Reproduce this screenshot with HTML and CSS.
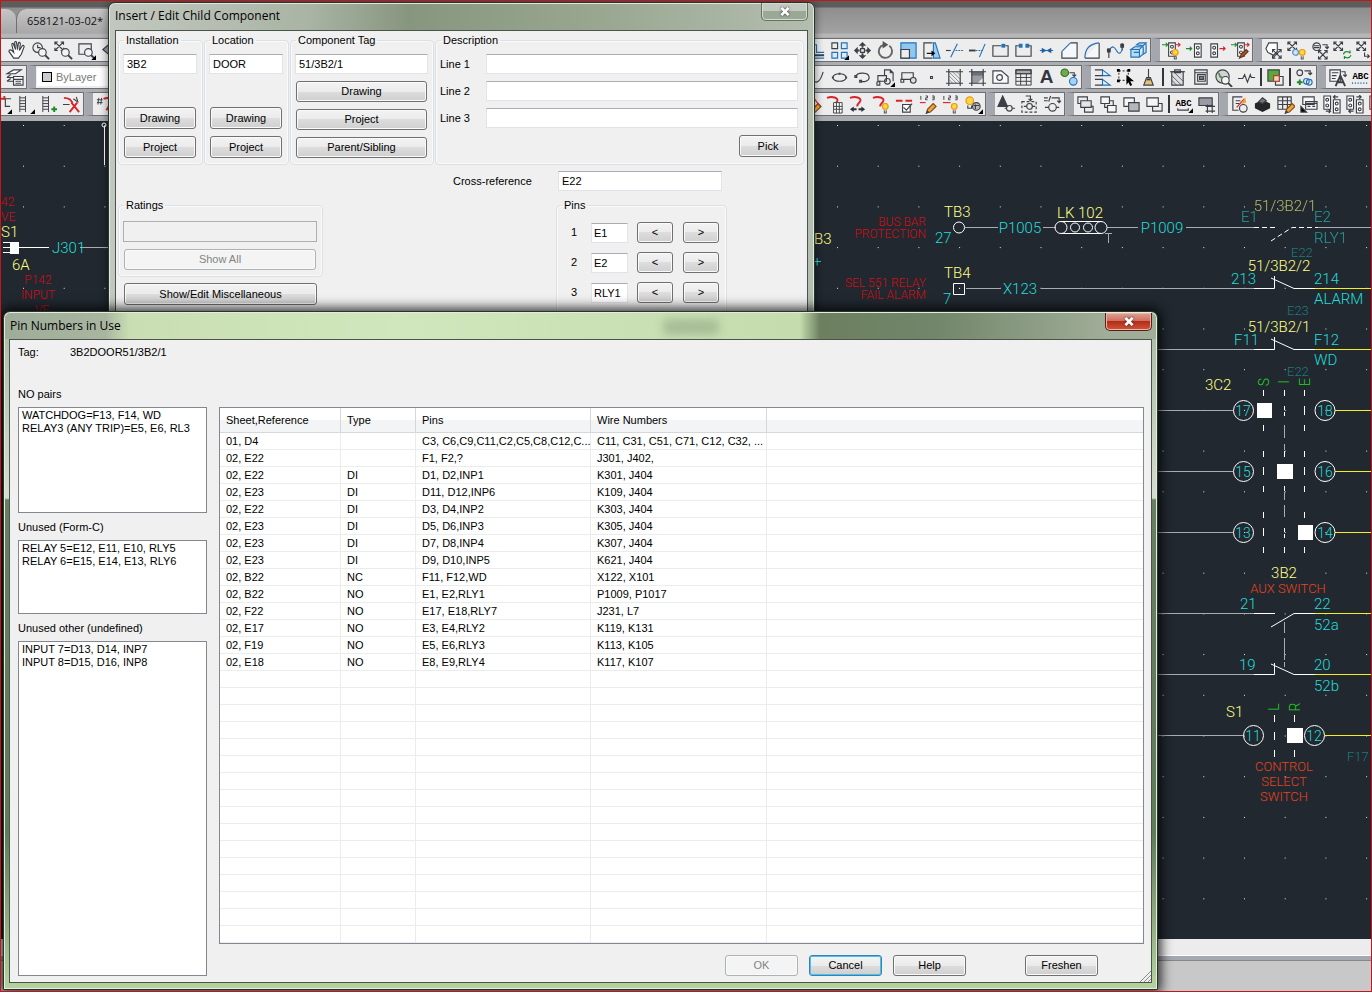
FILE: index.html
```html
<!DOCTYPE html>
<html lang="en">
<head>
  <meta charset="UTF-8">
  <meta name="viewport" content="width=device-width, initial-scale=1.0">
  <title>658121-03-02*</title>
  <link rel="stylesheet" href="styles.css">
</head>
<body>
  <!-- shared icon parts -->
  <svg class="defs" width="0" height="0">
    <defs>
      <g id="mag"><circle cx="12" cy="12" r="4" fill="#f4f4f4"/><path d="M15 15l4 4" stroke-width="2"/></g>
      <path id="more" d="M20 15v5h-5z" fill="#000" stroke="none"/>
      <g id="bulb"><circle cx="14" cy="12" r="3" fill="#ffd83a" stroke="#e8961e"/><path d="M13 16v3h2v-3" stroke="#56606c"/></g>
      <g id="pencil"><path d="M9 19l1-4 6-6 3 3-6 6z" fill="#f0a63a" stroke="#7d4a12"/><path d="M9 19l1-2 1 1z" fill="#222"/></g>
      <g id="term"><path d="M0 0h7v14H0z" fill="#fff"/><circle cx="3.500" cy="4" r="1.500"/><circle cx="3.500" cy="10" r="1.500"/></g>
      <path id="cross" d="M1 1l9 9M10 1L1 10M1 4V1h3M7 1h3v3M1 7v3h3M10 7v3H7"/>
      <path id="hook" class="red" stroke-width="2" d="M1 3c6-2 12 0 11 3s-4 3-3 6"/>
      <g id="ladder" stroke-width="1"><path d="M4 1v17M10 1v17M4 3h6M4 6h6M4 9h6M4 12h6M4 15h6"/></g>
    </defs>
  </svg>

  <header class="top">
    <nav class="tabs">
      <a class="tab tab-prev" href="#" aria-label="Previous drawing"></a>
      <a class="tab" href="#">658121-03-02*</a>
    </nav>

    <div class="tool-row">
      <div class="bars">
        <div class="bar bar-start pan">
          <button class="tool" aria-label="Pan"><svg viewBox="0 0 20 20"><path d="M6 18l-5-7c0-2 2-2 3-1l2 2-2-8c0-2 2-2 2 0l2 5-1-7c0-2 2-2 2 0l1 7 1-7c0-1 2-1 2 1l-1 7 3-5c1-1 2 0 2 1l-3 8-3 4z" fill="#fff"/></svg></button>
          <button class="tool" aria-label="Zoom realtime"><svg viewBox="0 0 20 20"><circle cx="7" cy="7" r="5"/><path d="M7 4v3h3"/><use href="#mag"/></svg></button>
          <button class="tool" aria-label="Zoom window"><svg viewBox="0 0 20 20"><use href="#cross"/><use href="#mag"/></svg></button>
          <button class="tool" aria-label="Zoom area"><svg viewBox="0 0 20 20"><path d="M2 3h13v11H2z"/><use href="#mag"/><use href="#more"/></svg></button>
          <button class="tool" aria-label="Zoom previous"><svg viewBox="0 0 20 20"><path d="M9 4L3 9l6 5z" fill="#9aa0a8"/></svg></button>
        </div>
      </div>
      <div class="bars">
        <div class="bar bar-start">
          <button class="tool" aria-label="Offset"><svg viewBox="0 0 20 20"><path class="blue" d="M2 4h8v8h8M2 18h16"/><path d="M2 8h5v7h11" stroke-width="2"/></svg></button>
          <button class="tool" aria-label="Array"><svg viewBox="0 0 20 20"><path d="M2 2h6v6H2z"/><path class="blue" d="M12 2h6v6h-6zM2 12h6v6H2zM12 12h6v6h-6z" fill="#d8ebfa"/><use href="#more"/></svg></button>
          <button class="tool" aria-label="Move"><svg viewBox="0 0 20 20"><path d="M8 8h4v4H8z"/><path d="M10 1l4 4h-3v2H9V5H6zM10 19l-4-4h3v-2h2v2h3zM1 10l4-4v3h2v2H5v3zM19 10l-4 4v-3h-2V9h2V6z" fill="#3c4046" stroke="none"/></svg></button>
          <button class="tool" aria-label="Rotate"><svg viewBox="0 0 20 20"><path d="M8 4a7 7 0 1 0 6 1" stroke="#666" stroke-width="2"/><path d="M7 0l6 4-6 4z" fill="#555" stroke="none"/></svg></button>
          <button class="tool" aria-label="Scale"><svg viewBox="0 0 20 20"><path d="M2 2h16v16H2z" fill="#8fc8ee" stroke="#2471b8"/><path d="M2 9h9v9H2z" fill="#eee"/></svg></button>
          <button class="tool" aria-label="Stretch"><svg viewBox="0 0 20 20"><path class="blue" d="M12 2h2l5 16h-7z" fill="#9ccdf0"/><path d="M11 2H2v16h9"/><path d="M5 13h7" stroke="#000"/><path d="M10 10l4 3-4 3z" fill="#000" stroke="none"/></svg></button>
          <button class="tool" aria-label="Trim"><svg viewBox="0 0 20 20"><path d="M1 10h5"/><path class="blue" d="M6 17l7-14"/><path class="blue" d="M11 10h9" stroke-dasharray="2 1"/></svg></button>
          <button class="tool" aria-label="Extend"><svg viewBox="0 0 20 20"><path d="M1 10h7" stroke-width="2"/><path class="blue" d="M12 17l6-14"/><path class="blue" d="M8 10h7" stroke-dasharray="2 1"/></svg></button>
          <button class="tool" aria-label="Break at point"><svg viewBox="0 0 20 20"><path d="M11 5H2v11h16V5h-3"/><path d="M11 3h4v4h-4z" fill="#2471b8" stroke="none"/></svg></button>
          <button class="tool" aria-label="Break"><svg viewBox="0 0 20 20"><path d="M5 5H2v11h16V5h-3"/><path d="M5 3h4v4H5zM12 3h4v4h-4z" fill="#2471b8" stroke="none"/></svg></button>
          <button class="tool" aria-label="Join"><svg viewBox="0 0 20 20"><path class="blue" d="M3 10h14"/><path d="M5 7l5 3-5 3zM15 7l-5 3 5 3z" fill="#1f5f9e" stroke="none"/></svg></button>
          <button class="tool" aria-label="Chamfer"><svg viewBox="0 0 20 20"><path d="M11 2h7v16H2v-7" fill="#f4f8fb"/><path class="blue" d="M2 11l9-9"/></svg></button>
          <button class="tool" aria-label="Fillet"><svg viewBox="0 0 20 20"><path d="M17 2v16H2" fill="#f4f8fb"/><path class="blue" d="M2 18C2 9 6 3 17 2"/></svg></button>
          <button class="tool" aria-label="Blend curves"><svg viewBox="0 0 20 20"><path d="M3 18V8M17 2v8"/><path class="blue" d="M3 10c4-6 6-4 8 0s5 5 7-5"/><path d="M1 8h4v4H1zM15 3h4v4h-4z" fill="#3c4046" stroke="none"/></svg></button>
          <button class="tool" aria-label="Explode"><svg viewBox="0 0 20 20"><path class="blue" d="M2 9l4-3h8l-3 3zM2 9h9v8H2zM11 17l4-3V6M8 4l3-2h7l-3 3zM15 14l3-2V3M5 12h6v4" fill="#b5dcf5"/></svg></button>
        </div>
        <div class="bar">
          <button class="tool" aria-label="Terminal lamp"><svg viewBox="0 0 20 20"><use href="#term" x="7" y="2"/><path class="green" d="M0 4h6M4 2l2 2-2 2"/><path class="red" d="M14 4h5M17 2l2 2-2 2"/><use href="#bulb"/></svg></button>
          <button class="tool" aria-label="Terminal in"><svg viewBox="0 0 20 20"><use href="#term" x="10" y="3"/><path class="green" d="M1 8h6M5 6l2 2-2 2"/></svg></button>
          <button class="tool" aria-label="Terminal out"><svg viewBox="0 0 20 20"><use href="#term" x="3" y="3"/><path class="red" d="M12 8h6M16 6l2 2-2 2"/></svg></button>
          <button class="tool" aria-label="Terminal erase"><svg viewBox="0 0 20 20"><use href="#term" x="7" y="2"/><path class="green" d="M0 4h6M4 2l2 2-2 2"/><path class="red" d="M14 4h5M17 2l2 2-2 2"/><path d="M9 18l2-4 5-5 2 2-5 5z" fill="#b5552c" stroke="#6c3018"/></svg></button>
        </div>
        <div class="bar">
          <button class="tool" aria-label="Find tag"><svg viewBox="0 0 20 20"><path d="M5 2h9v9l-4 4-6-3-2-4z" fill="#fff"/><use href="#cross" x="8" y="8"/></svg></button>
          <button class="tool" aria-label="Highlight references"><svg viewBox="0 0 20 20"><use href="#cross"/><circle cx="9" cy="12" r="3" fill="#cfe6fa" stroke="#4a8cc8"/><use href="#bulb" x="2"/></svg></button>
          <button class="tool" aria-label="Copy reference"><svg viewBox="0 0 20 20"><circle cx="7" cy="6" r="4"/><path d="M4 5h6M4 7h6M13 4h5v4M16 6l2 2 2-2"/><use href="#cross" x="8" y="9"/></svg></button>
          <button class="tool" aria-label="Update reference"><svg viewBox="0 0 20 20"><use href="#cross"/><path class="green" d="M11 14c1-4 6-3 7-1v-3M19 15c-2 4-6 3-7 1v3"/></svg></button>
          <button class="tool" aria-label="Reference list"><svg viewBox="0 0 20 20"><use href="#cross"/><path d="M9 12v4h5M12 14l2 2-2 2M16 13h4M16 16h4M16 19h4"/></svg></button>
        </div>
      </div>
    </div>

    <div class="tool-row">
      <div class="bars">
        <div class="bar bar-start layers">
          <button class="tool" aria-label="Layers"><svg viewBox="0 0 20 20"><path d="M2 6l7-4h8l-6 4zM2 10l4-3M2 14l4-3M2 10h7M2 14h7" fill="#fff"/><path d="M9 9h10v9H9zM9 12h10M11 14h6M11 16h6" fill="#fff"/></svg></button>
        </div>
        <div class="bar">
          <label class="combo"><i class="swatch"></i><select aria-label="Colour"><option>ByLayer</option></select></label>
        </div>
      </div>
      <div class="bars">
        <div class="bar bar-start">
          <button class="tool" aria-label="Arc"><svg viewBox="0 0 20 20"><path d="M6 12c4 6 8 2 11-8"/></svg></button>
          <button class="tool" aria-label="Ellipse"><svg viewBox="0 0 20 20"><ellipse cx="10" cy="10" rx="7" ry="4"/><path d="M2 9h2v2H2zM16 9h2v2h-2zM9 5h2v2H9z" fill="#3c4046" stroke="none"/></svg></button>
          <button class="tool" aria-label="Ellipse arc"><svg viewBox="0 0 20 20"><path d="M3 9c1-5 14-5 14 1 0 4-6 5-9 4M2 8h2v2H2zM7 13h2v2H7z"/></svg></button>
          <button class="tool" aria-label="Insert block"><svg viewBox="0 0 20 20"><path d="M9 8V2h6l3 3v9M15 2v3h3M2 8h9v6H2z"/><circle cx="12" cy="14" r="3"/><path d="M4 14v4H1v-3z"/><use href="#more"/></svg></button>
          <button class="tool" aria-label="Make block"><svg viewBox="0 0 20 20"><path d="M3 5h12v7H3zM2 12h3v3H2z"/><circle cx="15" cy="13" r="3" fill="#ddd"/></svg></button>
          <button class="tool" aria-label="Point"><svg viewBox="0 0 20 20"><path d="M9 9h2v2H9z"/></svg></button>
          <button class="tool" aria-label="Hatch"><svg viewBox="0 0 20 20"><path d="M4 8l8 8M4 12l4 4M4 4l12 12M8 4l8 8M12 4l4 4" stroke="#777" stroke-width="0.800"/><path d="M4 1v18M16 1v18M1 4h18M1 16h18"/></svg></button>
          <button class="tool" aria-label="Gradient"><svg viewBox="0 0 20 20"><path d="M4 4h12v6l-6 6H4z" fill="#9a9da1" stroke="none"/><path d="M4 4h12v4H4z" fill="#6d7075" stroke="none"/><path d="M4 1v18M16 1v18M1 4h18M1 16h18"/></svg></button>
          <button class="tool" aria-label="Region"><svg viewBox="0 0 20 20"><path d="M2 3h9l7 6v7H2z" fill="#f8f8f8"/><circle cx="9" cy="10" r="3"/></svg></button>
          <button class="tool" aria-label="Table"><svg viewBox="0 0 20 20"><path d="M2 2h16v4H2z" fill="#aaa"/><path d="M2 2h16v16H2zM2 6h16M2 10h16M2 14h16M7 6v12M13 6v12" stroke-width="1"/></svg></button>
          <button class="tool tool-text" aria-label="Text">A</button>
          <button class="tool" aria-label="Add selected"><svg viewBox="0 0 20 20"><circle cx="5" cy="5" r="4" fill="#6cab52" stroke="#376e26"/><circle cx="14" cy="14" r="4" fill="#a7d3f5" stroke="#2471b8"/><path d="M10 5h5v4M13 7l2 2 2-2"/></svg></button>
        </div>
        <div class="bar">
          <button class="tool" aria-label="Mirror"><svg viewBox="0 0 20 20"><path class="blue" d="M10 2l8 6h-8zM10 12l8 6h-8z" fill="#e3f1fb"/><path d="M10 2H2M10 8H2M10 12H2M10 18H2"/></svg></button>
          <button class="tool" aria-label="Select"><svg viewBox="0 0 20 20"><path d="M3 3h10v10H3z" stroke-dasharray="2 2"/><path d="M1 1h3v3H1zM12 1h3v3h-3zM1 12h3v3H1zM11 7l8 7h-4l2 4-2 1-2-4-2 3z" fill="#000" stroke="none"/></svg></button>
          <button class="tool" aria-label="Clean up"><svg viewBox="0 0 20 20"><path d="M10 1v9"/><path d="M8 10h4l3 8H5z" fill="#e3c17a"/><path d="M8 12h4" stroke-width="2"/></svg></button>
          <i class="sep"></i>
          <button class="tool" aria-label="Clipboard"><svg viewBox="0 0 20 20"><path d="M4 4h12v14H4z" fill="#dcdedf"/><path d="M4 8l10 10M4 13l5 5M6 4l10 10" stroke-width="0.800"/><path d="M2 4h16M7 2h6v3H7z"/></svg></button>
          <button class="tool" aria-label="Panel layout"><svg viewBox="0 0 20 20"><path d="M4 2h13v15H4zM7 7h8v7H7zM4 5h13" fill="#e4e6e8"/><path d="M9 9h4v3H9z" fill="#888"/></svg></button>
          <button class="tool" aria-label="Surfer"><svg viewBox="0 0 20 20"><circle cx="9" cy="9" r="7" fill="#cfd6d2"/><path d="M4 5c4 2 0 5 5 5" stroke="#5b8a5b" stroke-width="2"/><use href="#mag" y="1"/></svg></button>
          <button class="tool" aria-label="Signal"><svg viewBox="0 0 20 20"><path d="M1 11h5l2-4 3 8 3-8 1 3h4"/></svg></button>
          <i class="sep"></i>
          <button class="tool" aria-label="Send to back"><svg viewBox="0 0 20 20"><path d="M10 9h8v9h-8z"/><path d="M2 2h12v12H2z" fill="#57a83f"/><path d="M8 8h6v6H8z" fill="#e7d7bf" stroke="#c0392b"/></svg></button>
          <i class="sep"></i>
          <button class="tool" aria-label="Swap block"><svg viewBox="0 0 20 20"><circle cx="5" cy="5" r="3"/><path d="M10 3h6v4M14 5l2 2 2-2"/><path class="green" d="M5 12v6M2 15h6" stroke-width="2"/><circle cx="12" cy="14" r="3" stroke="#2471b8"/><circle cx="15" cy="15" r="3" stroke="#2471b8"/></svg></button>
        </div>
        <div class="bar">
          <button class="tool" aria-label="Text report"><svg viewBox="0 0 20 20"><path d="M2 2h11v12H2zM4 5h7M4 8h5M4 11h4M14 4h4v5M16 7l2 2 2-2" fill="#f4f4f4"/><path d="M8 19l5-11 5 11M10 15h6" stroke-width="2"/></svg></button>
          <button class="tool tool-abc" aria-label="Spelling">ABC<svg viewBox="0 0 20 20"><path class="blue" d="M1 17h18" stroke-dasharray="1 2" stroke-width="2"/></svg></button>
        </div>
      </div>
    </div>

    <div class="tool-row tool-row-last">
      <div class="bars">
        <div class="bar bar-start wires">
          <button class="tool" aria-label="Wire"><svg viewBox="0 0 20 20"><path class="red" d="M6 4h6v-3" stroke-width="2"/><path d="M12 4h7M13 4v8h5"/><use href="#more"/></svg></button>
          <button class="tool" aria-label="Ladder"><svg viewBox="0 0 20 20"><use href="#ladder"/><use href="#more"/></svg></button>
          <button class="tool" aria-label="Add rung"><svg viewBox="0 0 20 20"><use href="#ladder"/><path class="green" d="M16 12v6M13 15h6" stroke-width="2"/></svg></button>
          <button class="tool" aria-label="Trim wire"><svg viewBox="0 0 20 20"><path class="red" d="M2 3c5 0 8 2 9 6M8 18l8-10M18 18L10 8" stroke-width="2"/><path d="M1 10h7M12 4l4 3M15 2l2 6"/></svg></button>
        </div>
        <div class="bar">
          <button class="tool" aria-label="Wire number"><svg viewBox="0 0 20 20"><path d="M2 5h6M2 8h6M4 3L3 10M7 3L6 10" stroke-width="1"/><path class="red" d="M9 4c5-2 9 0 9 2l-6 10" stroke-width="2"/></svg></button>
        </div>
      </div>
      <div class="bars">
        <div class="bar bar-start">
          <button class="tool" aria-label="Edit wire"><svg viewBox="0 0 20 20"><use href="#pencil"/><path class="red" d="M12 4l6 8"/></svg></button>
          <button class="tool" aria-label="Wire table"><svg viewBox="0 0 20 20"><use href="#hook"/><path d="M8 8h9v11H8zM8 12h9M8 15h9M11 8v11M14 8v11" fill="#fff" stroke-width="1"/></svg></button>
          <button class="tool" aria-label="Flip wire"><svg viewBox="0 0 20 20"><use href="#hook"/><path d="M1 15l4-3v2h3v2H5v2zM17 15l-4-3v2h-3v2h3v2z" fill="#2d3238" stroke="none"/></svg></button>
          <button class="tool" aria-label="Show wire"><svg viewBox="0 0 20 20"><use href="#hook"/><use href="#bulb"/></svg></button>
          <button class="tool" aria-label="Check wire"><svg viewBox="0 0 20 20"><path class="red" d="M1 6h7M11 6h7" stroke-width="2"/><path d="M8 10h8v8H8z" fill="#fff"/><path d="M9 13l3 3 6-7"/></svg></button>
          <button class="tool" aria-label="Number wires"><svg viewBox="0 0 20 20"><path d="M3 1v4M8 1h2v2H8v2h2M15 1h2v4h-2M15 3h2" stroke-width="1"/><path class="red" d="M2 8h6"/><use href="#pencil"/></svg></button>
          <button class="tool" aria-label="Show numbers"><svg viewBox="0 0 20 20"><path d="M3 1v4M8 1h2v2H8v2h2M15 1h2v4h-2M15 3h2" stroke-width="1"/><path class="red" d="M2 8h8"/><use href="#bulb"/></svg></button>
          <button class="tool" aria-label="Lamp"><svg viewBox="0 0 20 20"><circle cx="6" cy="6" r="4" fill="#ffd83a" stroke="#e8961e"/><path d="M4 11v3h4v-3"/><circle cx="13" cy="12" r="4" fill="#bbb"/><path d="M10 11h6M12 10v5"/><use href="#more"/></svg></button>
        </div>
        <div class="bar">
          <button class="tool" aria-label="Insert component"><svg viewBox="0 0 20 20"><path d="M6 1l5 11H1z" fill="#3c4046"/><circle cx="13" cy="14" r="3"/><path d="M8 14h2M16 14h3"/></svg></button>
          <button class="tool" aria-label="Insert circuit"><svg viewBox="0 0 20 20"><path d="M2 7h15v11H2z" stroke-dasharray="3 2"/><circle cx="10" cy="12" r="3"/><path d="M4 12h3M13 12h3M6 1h5v4M9 4l2 2 2-2"/></svg></button>
          <button class="tool" aria-label="Convert component"><svg viewBox="0 0 20 20"><path d="M1 3h4M1 6h4M8 1L6 7M9 3h8v4M15 6l2 2 2-2"/><circle cx="10" cy="13" r="4"/><path d="M2 13h4M14 13h3"/></svg></button>
        </div>
        <div class="bar">
          <button class="tool" aria-label="Bring to front"><svg viewBox="0 0 20 20"><path d="M2 2h10v7H2zM9 12h9v6H9z"/><path d="M5 6h11v7H5z" fill="#e3e5e8"/></svg></button>
          <button class="tool" aria-label="Send back"><svg viewBox="0 0 20 20"><path d="M6 6h9v7H6z"/><path d="M2 2h9v7H2zM9 11h9v7H9z" fill="#f6f6f6"/></svg></button>
          <button class="tool" aria-label="Bring above"><svg viewBox="0 0 20 20"><path d="M2 3h11v9H2z" fill="#f6f6f6"/><path d="M7 8h11v9H7z" fill="#b4b8bd"/></svg></button>
          <button class="tool" aria-label="Send under"><svg viewBox="0 0 20 20"><path d="M8 9h10v8H8z"/><path d="M2 3h12v9H2z" fill="#f6f6f6"/></svg></button>
          <i class="sep"></i>
          <button class="tool tool-abc" aria-label="Text to front">ABC<svg viewBox="0 0 20 20"><path d="M4 15v2h11v-2"/><use href="#more"/></svg></button>
          <button class="tool" aria-label="Hatch to back"><svg viewBox="0 0 20 20"><path d="M2 3h14v8H2z" fill="#999da3"/><path d="M9 12h10M9 17h10M11 10v9M16 10v9"/></svg></button>
        </div>
        <div class="bar">
          <button class="tool" aria-label="Edit footprint"><svg viewBox="0 0 20 20"><path d="M13 2H3v14h6M6 6h5M6 9h4"/><path class="red" d="M7 13l8-9"/><path d="M12 10l4-8 1 6z" fill="#f7a02c" stroke="none"/><circle cx="14" cy="14" r="4"/></svg></button>
          <button class="tool" aria-label="Footprint"><svg viewBox="0 0 20 20"><path d="M2 9l8-4 8 4v5l-8 4-8-4z" fill="#24262a" stroke="none"/><path d="M6 7l4-4 4 3-4 3z" fill="#777"/></svg></button>
          <button class="tool" aria-label="Edit table"><svg viewBox="0 0 20 20"><path d="M2 2h14v13H2zM2 6h14M2 10h14M7 2v13M12 2v13"/><use href="#pencil" x="1"/></svg></button>
          <button class="tool" aria-label="Panel window"><svg viewBox="0 0 20 20"><path d="M4 2h12v8H4zM7 7h12v8H7zM7 9h12M9 12h3M14 12h3" fill="#f6f6f6"/><path d="M2 12v6h6z" fill="#000"/></svg></button>
          <button class="tool" aria-label="Terminal previous"><svg viewBox="0 0 20 20"><use href="#term" x="2" y="1"/><use href="#term" x="12" y="5"/><path d="M12 2h5M14 0l-2 2 2 2M4 17h5M7 15l2 2-2 2"/></svg></button>
          <button class="tool" aria-label="Terminal next"><svg viewBox="0 0 20 20"><use href="#term" x="2" y="1"/><use href="#term" x="12" y="5"/><path d="M12 2h5M15 0l2 2-2 2M4 17h5M6 15l-2 2 2 2"/></svg></button>
          <button class="tool" aria-label="Terminal strip"><svg viewBox="0 0 20 20"><use href="#term" x="2" y="1"/><use href="#term" x="12" y="5"/></svg></button>
        </div>
      </div>
    </div>
  </header>

  <main class="cad">
    <svg width="100%" height="100%">
      <defs>
        <pattern id="dots" x="23" y="125" width="40.700" height="40.700" patternUnits="userSpaceOnUse"><path d="M0 0h1v1H0z" fill="#e4e8ec"/></pattern>
      </defs>
      <g transform="translate(-1 -121)">
        <rect x="0" y="121" width="4000" height="3000" fill="url(#dots)"/>

        <!-- left fragment -->
        <g class="wire"><path d="M80 247.500h30"/><path class="white" d="M3 242.500h8M3 247.500h8M3 252.500h8M19 247.500h30M104.500 126v39"/><circle class="white" cx="104" cy="125" r="2"/></g>
        <path class="solid" d="M10 242h9v12h-9z"/>
        <g class="t red-t"><text x="1" y="206">42</text><text x="1" y="221">VE</text><text x="38" y="284" class="mid">P142</text><text x="38" y="299" class="mid">INPUT</text><text x="42" y="314" class="mid">VE</text></g>
        <g class="t yel"><text x="1" y="237">S1</text><text x="12" y="270">6A</text></g>
        <text class="t cyan" x="52" y="253">J301</text>

        <!-- terminals TB3 / TB4 -->
        <g class="t red-t end"><text x="926" y="226">BUS BAR</text><text x="926" y="238">PROTECTION</text><text x="926" y="287">SEL 551 RELAY</text><text x="926" y="299">FAIL ALARM</text></g>
        <g class="t yel"><text x="814" y="244">B3</text><text x="944" y="217">TB3</text><text x="944" y="278">TB4</text><text x="1080" y="218" class="mid">LK 102</text></g>
        <g class="t cyan"><text x="813" y="266">+</text><text x="935" y="243">27</text><text x="943" y="304">7</text><text x="1020" y="233" class="mid">P1005</text><text x="1162" y="233" class="mid">P1009</text><text x="1020" y="294" class="mid">X123</text></g>
        <g class="wire">
          <path d="M965 227.500h33M1043 227.500h13M1107 227.500h31M1186 227.500h68M1318 227.500h60M966 288.500h34M1041 288.500h213M1105 233.500h7M1108.500 233v10"/>
          <g class="white"><circle cx="959" cy="227.500" r="5.500"/><circle cx="1061" cy="227.500" r="6"/><circle cx="1075" cy="227.500" r="4.500"/><circle cx="1088" cy="227.500" r="4.500"/><circle cx="1101" cy="227.500" r="6"/><path d="M1061 221.500h40M1061 233.500h40M953.500 283.500h11v11h-11zM959 288.500h1"/></g>
          <path class="white" stroke-dasharray="5 3" d="M1254 227.500h22M1271 241l21-13.500h26"/>
        </g>

        <!-- relay contacts -->
        <g class="t yel"><text x="1285" y="211" class="mid faded">51/3B2/1</text><text x="1279" y="271" class="mid">51/3B2/2</text><text x="1279" y="332" class="mid">51/3B2/1</text></g>
        <g class="t cyan"><text x="1241" y="222" class="faded">E1</text><text x="1314" y="222" class="faded">E2</text><text x="1314" y="243" class="faded">RLY1</text><text x="1231" y="284">213</text><text x="1314" y="284">214</text><text x="1314" y="304">ALARM</text><text x="1234" y="345">F11</text><text x="1314" y="345">F12</text><text x="1314" y="365">WD</text></g>
        <g class="t teal"><text x="1291" y="257">E22</text><text x="1287" y="315">E23</text><text x="1287" y="376">E22</text><text x="1347" y="761">F17</text></g>
        <g class="wire">
          <path d="M1150 349.500h105"/>
          <path class="white" d="M1254 288.500h20.500V276M1271 278l23 10.500h21M1254 349.500h20.500V337M1271 339l23 10.500h21"/>
          <path class="yellow" d="M1315 288.500h500M1315 349.500h500M1335 410.500h500M1335 471.500h500M1335 532.500h500M1315 613.500h500M1315 674.500h500M1325 735.500h500"/>
        </g>

        <!-- 3C2 switch -->
        <text class="t yel" x="1205" y="390">3C2</text>
        <g class="t grn mid"><text transform="translate(1269 382) rotate(-90)">S</text><text transform="translate(1289 382) rotate(-90)">I</text><text transform="translate(1310 382) rotate(-90)">E</text><text transform="translate(1279 707) rotate(-90)">L</text><text transform="translate(1300 707) rotate(-90)">R</text></g>
        <g class="wire">
          <path d="M1150 410.500h83M1150 471.500h83M1150 532.500h83M1284.500 425v13M1284.500 444v6M1284.500 492v8M1284.500 505v12"/>
          <path class="white" d="M1263.500 390v6M1263.500 425v6M1263.500 451v6M1263.500 467v8M1263.500 486v6M1263.500 512v6M1263.500 528v8M1263.500 547v6M1284.500 390v6M1284.500 406v4M1284.500 412v4M1284.500 451v6M1284.500 486v5M1284.500 528v4M1284.500 534v4M1284.500 547v6M1304.500 390v6M1304.500 406v9M1304.500 425v6M1304.500 451v6M1304.500 467v8M1304.500 486v6M1304.500 512v6M1304.500 547v6"/>
          <g class="white"><circle cx="1243.500" cy="410.500" r="10"/><circle cx="1325" cy="410.500" r="10"/><circle cx="1243.500" cy="471.500" r="10"/><circle cx="1325" cy="471.500" r="10"/><circle cx="1243.500" cy="532.500" r="10"/><circle cx="1325" cy="532.500" r="10"/><circle cx="1253.500" cy="735.500" r="10"/><circle cx="1314.500" cy="735.500" r="10"/></g>
        </g>
        <path class="solid" d="M1257 403h15v15h-15zM1277 464h16v15h-16zM1298 525h15v15h-15zM1287 728h16v15h-16z"/>
        <g class="t pin mid"><text x="1243" y="416">17</text><text x="1325" y="416">18</text><text x="1243" y="477">15</text><text x="1325" y="477">16</text><text x="1243" y="538">13</text><text x="1325" y="538">14</text><text x="1253" y="741">11</text><text x="1314" y="741">12</text></g>

        <!-- 3B2 aux switch -->
        <text class="t yel mid" x="1284" y="578">3B2</text>
        <g class="t org mid"><text x="1288" y="593">AUX SWITCH</text><text x="1284" y="771">CONTROL</text><text x="1284" y="786">SELECT</text><text x="1284" y="801">SWITCH</text></g>
        <g class="t cyan"><text x="1240" y="609">21</text><text x="1314" y="609">22</text><text x="1314" y="630">52a</text><text x="1239" y="670">19</text><text x="1314" y="670">20</text><text x="1314" y="691">52b</text></g>
        <g class="wire">
          <path d="M1150 613.500h105M1150 674.500h105M1150 735.500h93M1284.500 622v11M1284.500 638v22M1284.500 662v5"/>
          <path class="white" d="M1254 613.500h21M1271 627l23-13.500h21M1254 674.500h20.500V663M1271 664l23 10.500h21M1274.500 715v7M1274.500 732v8M1274.500 750v7M1294.500 715v7M1294.500 750v7"/>
        </g>

        <text class="t yel" x="1226" y="717">S1</text>
      </g>
    </svg>
  </main>

  <footer class="bottom"></footer>

  <section class="dialog edit-dialog">
    <div class="titlebar">
      <h2>Insert / Edit Child Component</h2>
      <button class="close" aria-label="Close"><svg viewBox="0 0 12 10"><path d="M2 1l8 8M10 1L2 9"/></svg></button>
    </div>
    <div class="client">
      <div class="groups">
        <fieldset class="group">
          <legend>Installation</legend>
          <input type="text" value="3B2" aria-label="Installation">
          <button class="btn push">Drawing</button>
          <button class="btn">Project</button>
        </fieldset>
        <fieldset class="group">
          <legend>Location</legend>
          <input type="text" value="DOOR" aria-label="Location">
          <button class="btn push">Drawing</button>
          <button class="btn">Project</button>
        </fieldset>
        <fieldset class="group group-tag">
          <legend>Component Tag</legend>
          <input type="text" value="51/3B2/1" aria-label="Component Tag">
          <button class="btn">Drawing</button>
          <button class="btn">Project</button>
          <button class="btn">Parent/Sibling</button>
        </fieldset>
        <fieldset class="group group-desc">
          <legend>Description</legend>
          <div class="line"><label for="line1">Line 1</label><input type="text" id="line1"></div>
          <div class="line"><label for="line2">Line 2</label><input type="text" id="line2"></div>
          <div class="line"><label for="line3">Line 3</label><input type="text" id="line3"></div>
          <button class="btn pick">Pick</button>
        </fieldset>
      </div>

      <div class="xref">
        <label for="xref">Cross-reference</label>
        <input type="text" id="xref" value="E22">
      </div>

      <div class="lower">
        <div class="ratings-col">
          <fieldset class="group ratings">
            <legend>Ratings</legend>
            <input type="text" aria-label="Ratings" disabled>
            <button class="btn" disabled>Show All</button>
          </fieldset>
          <button class="btn misc">Show/Edit Miscellaneous</button>
        </div>
        <fieldset class="group pins">
          <legend>Pins</legend>
          <div class="pin-row"><label for="pin1">1</label><input type="text" id="pin1" value="E1"><button class="btn">&lt;</button><button class="btn">&gt;</button></div>
          <div class="pin-row"><label for="pin2">2</label><input type="text" id="pin2" value="E2"><button class="btn">&lt;</button><button class="btn">&gt;</button></div>
          <div class="pin-row"><label for="pin3">3</label><input type="text" id="pin3" value="RLY1"><button class="btn">&lt;</button><button class="btn">&gt;</button></div>
        </fieldset>
      </div>
    </div>
  </section>

  <section class="dialog pins-dialog">
    <div class="titlebar">
      <i class="ghost"></i>
      <h2>Pin Numbers in Use</h2>
      <button class="close close-red" aria-label="Close"><svg viewBox="0 0 12 10"><path d="M2 1l8 8M10 1L2 9"/></svg></button>
    </div>
    <div class="client">
      <div class="tag"><span>Tag:</span><span>3B2DOOR51/3B2/1</span></div>
      <div class="columns">
        <div class="lists">
          <label for="no-pairs">NO pairs</label>
          <select id="no-pairs" class="list list-no" size="8">
            <option>WATCHDOG=F13, F14, WD</option>
            <option>RELAY3 (ANY TRIP)=E5, E6, RL3</option>
          </select>
          <label for="form-c">Unused (Form-C)</label>
          <select id="form-c" class="list list-formc" size="5">
            <option>RELAY 5=E12, E11, E10, RLY5</option>
            <option>RELAY 6=E15, E14, E13, RLY6</option>
          </select>
          <label for="other">Unused other (undefined)</label>
          <select id="other" class="list list-other" size="20">
            <option>INPUT 7=D13, D14, INP7</option>
            <option>INPUT 8=D15, D16, INP8</option>
          </select>
        </div>
        <div class="results">
          <div class="table-box">
            <table>
              <colgroup><col class="c-sheet"><col class="c-type"><col class="c-pins"><col class="c-wires"><col></colgroup>
              <thead>
                <tr><th>Sheet,Reference</th><th>Type</th><th>Pins</th><th>Wire Numbers</th><th></th></tr>
              </thead>
              <tbody>
                <tr><td>01, D4</td><td></td><td>C3, C6,C9,C11,C2,C5,C8,C12,C...</td><td>C11, C31, C51, C71, C12, C32, ...</td><td></td></tr>
                <tr><td>02, E22</td><td></td><td>F1, F2,?</td><td>J301, J402,</td><td></td></tr>
                <tr><td>02, E22</td><td>DI</td><td>D1, D2,INP1</td><td>K301, J404</td><td></td></tr>
                <tr><td>02, E23</td><td>DI</td><td>D11, D12,INP6</td><td>K109, J404</td><td></td></tr>
                <tr><td>02, E22</td><td>DI</td><td>D3, D4,INP2</td><td>K303, J404</td><td></td></tr>
                <tr><td>02, E23</td><td>DI</td><td>D5, D6,INP3</td><td>K305, J404</td><td></td></tr>
                <tr><td>02, E23</td><td>DI</td><td>D7, D8,INP4</td><td>K307, J404</td><td></td></tr>
                <tr><td>02, E23</td><td>DI</td><td>D9, D10,INP5</td><td>K621, J404</td><td></td></tr>
                <tr><td>02, B22</td><td>NC</td><td>F11, F12,WD</td><td>X122, X101</td><td></td></tr>
                <tr><td>02, B22</td><td>NO</td><td>E1, E2,RLY1</td><td>P1009, P1017</td><td></td></tr>
                <tr><td>02, F22</td><td>NO</td><td>E17, E18,RLY7</td><td>J231, L7</td><td></td></tr>
                <tr><td>02, E17</td><td>NO</td><td>E3, E4,RLY2</td><td>K119, K131</td><td></td></tr>
                <tr><td>02, F19</td><td>NO</td><td>E5, E6,RLY3</td><td>K113, K105</td><td></td></tr>
                <tr><td>02, E18</td><td>NO</td><td>E8, E9,RLY4</td><td>K117, K107</td><td></td></tr>
                <tr><td></td><td></td><td></td><td></td><td></td></tr>
                <tr><td></td><td></td><td></td><td></td><td></td></tr>
                <tr><td></td><td></td><td></td><td></td><td></td></tr>
                <tr><td></td><td></td><td></td><td></td><td></td></tr>
                <tr><td></td><td></td><td></td><td></td><td></td></tr>
                <tr><td></td><td></td><td></td><td></td><td></td></tr>
                <tr><td></td><td></td><td></td><td></td><td></td></tr>
                <tr><td></td><td></td><td></td><td></td><td></td></tr>
                <tr><td></td><td></td><td></td><td></td><td></td></tr>
                <tr><td></td><td></td><td></td><td></td><td></td></tr>
                <tr><td></td><td></td><td></td><td></td><td></td></tr>
                <tr><td></td><td></td><td></td><td></td><td></td></tr>
                <tr><td></td><td></td><td></td><td></td><td></td></tr>
                <tr><td></td><td></td><td></td><td></td><td></td></tr>
                <tr><td></td><td></td><td></td><td></td><td></td></tr>
                <tr><td></td><td></td><td></td><td></td><td></td></tr>
              </tbody>
            </table>
          </div>
          <div class="actions">
            <button class="btn" disabled>OK</button>
            <button class="btn btn-focus">Cancel</button>
            <button class="btn">Help</button>
            <button class="btn freshen">Freshen</button>
          </div>
        </div>
      </div>
      <svg class="grip" viewBox="0 0 12 12"><path d="M1 12L12 1M5 12l7-7M9 12l3-3"/></svg>
    </div>
  </section>
</body>
</html>
```

FILE: styles.css
```css
* {
  box-sizing: border-box;
}
body {
  position: relative;
  display: flex;
  flex-direction: column;
  min-height: 100vh;
  margin: 0;
  border: 1px solid #c4141c;
  overflow: hidden;
  background-color: #acadb1;
  font-family: "Liberation Sans", Arial, sans-serif;
  font-size: 11px;
  line-height: 13px;
  color: #000;
}
button, input, select {
  font: inherit;
  color: inherit;
}
.defs {
  position: absolute;
}

/* file tabs */
.top {
  background-color: #acadb1;
  padding-bottom: 2px;
}
.tabs {
  display: flex;
  align-items: flex-end;
  height: 36px;
  margin-bottom: 1px;
  padding-top: 6px;
  background: linear-gradient(#5c5e5c 0, #5c5e5c 6px, #8e8e8e 7px, #a2a2a2 32px, #b6b6b6 33px);
}
.tab {
  height: 24px;
  margin-bottom: 4px;
  padding: 4px 12px 0 10px;
  border-left: 1px solid #6f6f6f;
  border-radius: 10px 0 0 0;
  background: linear-gradient(#c6c6c6, #a8a8a8);
  font-family: "Open Sans", "Noto Sans", sans-serif;
  font-size: 11px;
  line-height: 15px;
  color: #111;
  text-decoration: none;
}
.tab-prev {
  width: 15px;
  padding: 0;
  border: 0;
  border-radius: 0 10px 0 0;
}

/* toolbars */
.tool-row {
  display: grid;
  grid-template-columns: 804px 1fr;
  height: 24px;
  margin-bottom: 3px;
}
.tool-row-last {
  grid-template-columns: 800px 1fr;
}
.bars {
  display: flex;
  gap: 1px;
  min-width: 0;
  overflow: hidden;
}
.bar {
  display: flex;
  flex: none;
  align-items: center;
  height: 24px;
  border: 1px solid #6c6e74;
  border-left: 8px solid #a4a7ae;
  background-color: #ededed;
}
.bar-start {
  border-left: 0;
}
.pan {
  padding-left: 5px;
}
.layers {
  padding-left: 2px;
}
.wires {
  margin-left: -10px;
}
.tool {
  position: relative;
  flex: none;
  width: 23px;
  height: 22px;
  padding: 1px;
  border: 0;
  background: none;
}
.tool svg {
  display: block;
  width: 19px;
  height: 19px;
  margin: 0 auto;
  fill: none;
  stroke: #3c4046;
  stroke-width: 1.2;
}
.red {
  stroke: #d8232a;
}
.green {
  stroke: #1c8a2c;
}
.blue {
  stroke: #2471b8;
}
.tool-text {
  font-size: 19px;
  font-weight: bold;
  line-height: 20px;
  color: #33373d;
}
.tool-abc {
  font-family: "Liberation Mono", monospace;
  font-size: 9px;
  font-weight: bold;
  line-height: 9px;
}
.tool-abc svg {
  position: absolute;
  left: 2px;
  top: 1px;
}
.sep {
  width: 2px;
  height: 18px;
  margin: 0 2px;
  background-color: #33363b;
}
.combo {
  display: flex;
  align-items: center;
  gap: 4px;
  width: 100px;
  height: 18px;
  margin-left: 1px;
  padding-left: 5px;
  background-color: #fff;
  color: #777;
}
.combo select {
  appearance: none;
  padding: 0;
  border: 0;
  background: none;
}
.swatch {
  width: 10px;
  height: 10px;
  border: 1px solid #000;
  background-color: #ccc;
}

/* drawing area */
.cad {
  position: relative;
  flex: 1;
  min-height: 400px;
  background-color: #212830;
}
.cad svg {
  position: absolute;
  inset: 0;
}
.t {
  font-family: Roboto, "Liberation Sans", sans-serif;
  font-size: 15px;
  font-weight: 300;
}
.mid {
  text-anchor: middle;
}
.end {
  text-anchor: end;
}
.yel {
  fill: #ffff84;
}
.cyan {
  fill: #22dcd8;
}
.teal {
  fill: #1d7a7c;
  font-size: 13px;
}
.grn {
  fill: #1fd81f;
  font-size: 14px;
}
.pin {
  fill: #22dcd8;
  font-size: 14px;
}
.red-t {
  fill: #d20d14;
  font-size: 12px;
}
.org {
  fill: #e8431c;
  font-size: 13px;
}
.faded {
  opacity: 0.65;
}
.wire {
  fill: none;
  stroke: #a9adb1;
}
.wire .white {
  stroke: #fff;
}
.wire .yellow {
  stroke: #f4f01c;
}
.solid {
  fill: #fff;
}
.bottom {
  height: 52px;
  background: linear-gradient(#ececec 0, #ececec 16px, #fff 16px, #fff 17px, #a4a8b0 17px, #a4a8b0 21px, #85878c 21px, #85878c 22px, #c8c8c8 22px);
}

/* windows */
.dialog {
  position: absolute;
  display: flex;
  flex-direction: column;
  border: 1px solid #28332a;
  border-radius: 7px 7px 0 0;
}
.edit-dialog {
  left: 107px;
  top: 1px;
  width: 707px;
  height: 330px;
  padding: 0 6px 6px;
  background: linear-gradient(90deg, #c2c8bf 0, #a9b4a4 200px, #87967f 300px, #9aa892 500px, #b4beb0 100%);
  box-shadow: inset 0 0 0 1px #e2e8df, 0 0 8px rgba(0, 0, 0, 0.5);
}
.pins-dialog {
  left: 2px;
  top: 310px;
  right: 213px;
  bottom: 1px;
  padding: 0 5px 6px;
  background: linear-gradient(#a9b8a2 0, #d5ded0 186px, #668063 188px, #5f7c5b 520px, #b5d29f 100%);
  box-shadow: inset 0 0 0 1px #e2eedb, 0 0 12px 3px rgba(0, 0, 0, 0.8);
}
.titlebar {
  position: relative;
  display: flex;
  justify-content: space-between;
  flex: none;
  height: 27px;
}
.titlebar h2 {
  position: relative;
  margin: 0;
  padding-top: 5px;
  font-family: "Open Sans", "Noto Sans", sans-serif;
  font-size: 12px;
  font-weight: normal;
  line-height: 16px;
}
.pins-dialog .titlebar {
  margin: 1px -4px 0;
  height: 26px;
  padding: 0 4px 0 5px;
  border-radius: 6px 6px 0 0;
  background: linear-gradient(90deg, #9fac9a 0, #a8b59f 100px, #c9dfb3 125px, #d0e6bc 400px, #c4dcae 795px, #6c8060 815px, #71866a 930px, #a0ad98 1100px);
}
.ghost {
  position: absolute;
  left: 658px;
  top: 6px;
  width: 56px;
  height: 16px;
  border-radius: 4px;
  background-color: #a8be96;
  filter: blur(4px);
}
.close {
  width: 47px;
  height: 18px;
  padding: 0;
  border: 1px solid #66715f;
  border-top: 0;
  border-radius: 0 0 5px 5px;
  background: linear-gradient(#c2cabf 50%, #9ba896 50%);
  box-shadow: inset 0 0 0 1px #d5dbd2;
}
.close svg {
  display: block;
  width: 12px;
  height: 9px;
  margin: 0 auto;
  fill: none;
  stroke: #fff;
  stroke-width: 3;
  filter: drop-shadow(0 0 1px #333);
}
.close-red {
  border-color: #5c1f18;
  background: linear-gradient(#dda296 0, #cf6a59 50%, #b42d16 50%, #d0553a 100%);
  box-shadow: inset 0 0 0 1px #e8b5a8;
}
.client {
  position: relative;
  flex: 1;
  min-height: 0;
  border: 1px solid #4a544a;
  background-color: #f0f0f0;
}
input[type="text"] {
  width: 100%;
  min-width: 0;
  height: 20px;
  padding: 0 3px;
  border: 1px solid #e2e3ea;
  border-top-color: #abadb3;
  background-color: #fff;
}
input[type="text"]:disabled {
  height: 21px;
  border-color: #afafaf;
  background-color: #f0f0f0;
}
.btn {
  height: 22px;
  padding: 0;
  border: 1px solid #707070;
  border-radius: 3px;
  background: linear-gradient(#f3f3f3 0, #ebebeb 50%, #dddddd 50%, #cfcfcf 100%);
  box-shadow: inset 0 0 0 1px #fafafa;
}
.btn:disabled {
  border-color: #adb2b5;
  background: #f4f4f4;
  color: #838383;
}
.btn-focus {
  border-color: #3c7fb1;
  box-shadow: inset 0 0 0 1px #46c4ee;
}

/* insert / edit dialog */
.edit-dialog .client {
  padding: 3px 3px 0 2px;
}
.groups {
  display: flex;
  gap: 1px;
  height: 131px;
}
.group {
  display: flex;
  flex-direction: column;
  gap: 7px;
  width: 85px;
  min-width: 0;
  margin: 0;
  padding: 7px 5px 6px 4px;
  border: 1px solid #d9e1e6;
  border-radius: 4px;
  box-shadow: inset 0 0 0 1px #fafafa;
}
.group legend {
  margin-left: 1px;
  padding: 0 2px;
}
.group .btn {
  flex: none;
  margin: 0 1px;
}
.group .push {
  margin-top: auto;
}
.group-tag {
  width: 144px;
}
.group-tag .btn {
  height: 21px;
}
.group-desc {
  flex: 1;
}
.line {
  display: grid;
  grid-template-columns: 46px 1fr;
  align-items: center;
}
.group-desc .pick {
  width: 58px;
  align-self: flex-end;
}
.xref {
  display: grid;
  grid-template-columns: 105px 164px;
  align-items: center;
  margin: 6px 0 0 335px;
}
.lower {
  display: grid;
  grid-template-columns: 205px 171px;
  gap: 233px;
  margin-top: 8px;
}
.ratings-col {
  display: flex;
  flex-direction: column;
  gap: 6px;
}
.ratings {
  width: 205px;
  padding-top: 9px;
}
.ratings .btn {
  height: 21px;
}
.misc {
  margin: 0 6px;
}
.pins {
  width: 171px;
  height: 130px;
  gap: 9px;
  padding: 10px 8px 0 14px;
}
.pins legend {
  margin-left: -9px;
}
.pin-row {
  display: grid;
  grid-template-columns: 12px 37px 38px 38px;
  column-gap: 8px;
  align-items: center;
}
.pin-row .btn {
  height: 21px;
}
.pin-row input[type="text"] {
  padding: 0 2px;
}

/* pin numbers dialog */
.pins-dialog .client {
  display: flex;
  flex-direction: column;
  padding: 6px 7px 9px 8px;
}
.tag {
  display: grid;
  grid-template-columns: 52px 1fr;
}
.columns {
  display: grid;
  grid-template-columns: 189px 1fr;
  gap: 12px;
  flex: 1;
  min-height: 0;
  margin-top: 28px;
}
.lists {
  display: flex;
  flex-direction: column;
  gap: 7px;
  min-height: 0;
}
.lists label {
  margin: 1px 0 -1px;
}
.list {
  width: 100%;
  padding: 1px 0 0;
  border: 1px solid #828790;
  border-radius: 0;
  background-color: #fff;
  overflow: hidden;
}
.list option {
  min-height: 13px;
  padding: 0 3px;
  line-height: 13px;
}
.list-no {
  flex: none;
  height: 106px;
}
.list-formc {
  flex: none;
  height: 74px;
}
.list-other {
  flex: 1;
  height: 0;
  min-height: 0;
}
.results {
  display: flex;
  flex-direction: column;
  gap: 11px;
  min-width: 0;
  padding-top: 20px;
}
.table-box {
  flex: 1;
  height: 0;
  border: 1px solid #828790;
  background-color: #fff;
  overflow: hidden;
}
table {
  width: 100%;
  table-layout: fixed;
  border-collapse: separate;
  border-spacing: 0;
}
.c-sheet {
  width: 121px;
}
.c-type {
  width: 75px;
}
.c-pins {
  width: 175px;
}
.c-wires {
  width: 176px;
}
th, td {
  height: 17px;
  padding: 1px 0 0 6px;
  border-right: 1px solid #ececee;
  border-bottom: 1px solid #ececee;
  text-align: left;
  white-space: nowrap;
}
th {
  height: 25px;
  border-color: #d5d7da;
  background: linear-gradient(#fff 50%, #f3f4f6 50%);
  font-weight: normal;
}
th:last-child, td:last-child {
  border-right: 0;
}
.actions {
  display: flex;
  justify-content: flex-end;
  gap: 11px;
  padding-right: 46px;
}
.actions .btn {
  width: 73px;
  height: 21px;
}
.freshen {
  margin-left: 48px;
}
.grip {
  position: absolute;
  right: 0;
  bottom: 0;
  width: 12px;
  height: 12px;
  fill: none;
  stroke: #8a8a8a;
}
```
